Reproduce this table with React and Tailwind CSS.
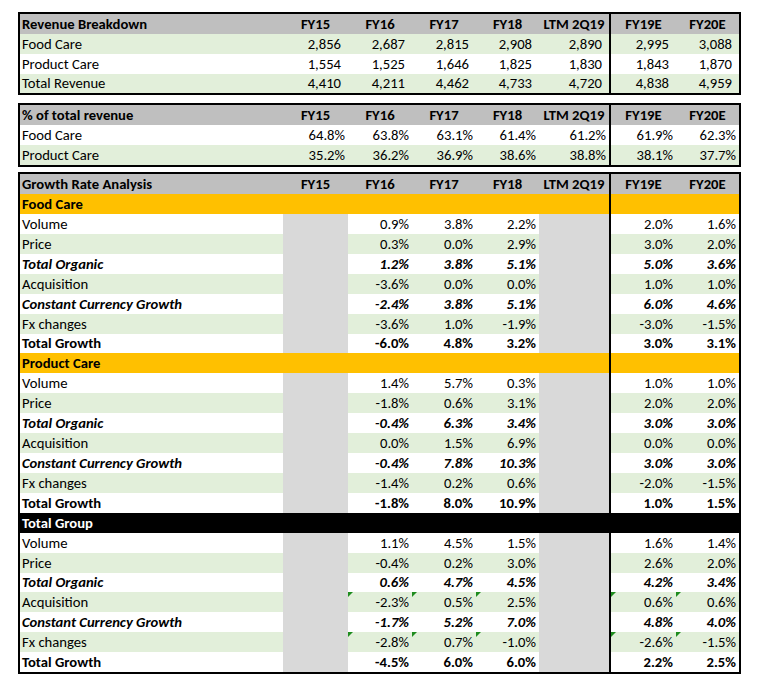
import React from "react";

const GREEN = "bg-[#e2efda]";
const GREY = "bg-[#d9d9d9]";

function Marker() {
  return (
    <span className="absolute left-0 top-0 w-0 h-0 border-t-[5px] border-r-[5px] border-t-[#1e8c1e] border-r-transparent" />
  );
}

function HeaderRow({ title }) {
  const cols = ["FY15", "FY16", "FY17", "FY18", "LTM 2Q19"];
  const widths = ["w-[65px]", "w-[64px]", "w-[64px]", "w-[63px]", "w-[70px]"];
  return (
    <div className="flex h-[20px] bg-[#bfbfbf] font-bold items-center">
      <div className="w-[263px] pl-[2px]">{title}</div>
      {cols.map((c, i) => (
        <div key={c} className={`${widths[i]} text-center`}>{c}</div>
      ))}
      <div className="w-[67px] h-full border-l-2 border-black flex items-center justify-center">FY19E</div>
      <div className="w-[63px] text-center">FY20E</div>
    </div>
  );
}

function DataRow({ label, vals, bg, style = "", pr = "pr-[3px]", grey = false, markers = false, h = "h-[20px]" }) {
  const widths = ["w-[65px]", "w-[64px]", "w-[64px]", "w-[63px]", "w-[70px]"];
  const pad = pr;
  return (
    <div className={`flex ${h} items-stretch ${bg} ${style}`}>
      <div className="w-[263px] pl-[2px] flex items-center">{label}</div>
      {vals.slice(0, 5).map((v, i) => {
        const isGrey = grey && (i === 0 || i === 4);
        return (
          <div
            key={i}
            className={`relative ${widths[i]} ${pad} flex items-center justify-end ${isGrey ? GREY : ""}`}
          >
            {markers && !isGrey && <Marker />}
            {v}
          </div>
        );
      })}
      <div className={`relative w-[67px] border-l-2 border-black ${pad} flex items-center justify-end`}>
        {markers && <Marker />}
        {vals[5]}
      </div>
      <div className={`relative w-[63px] ${pad} flex items-center justify-end`}>
        {markers && <Marker />}
        {vals[6]}
      </div>
    </div>
  );
}

function SectionRow({ label, bg, text = "text-black" }) {
  return (
    <div className={`flex h-[20px] items-stretch font-bold ${bg} ${text}`}>
      <div className="w-[263px] pl-[2px] flex items-center">{label}</div>
      <div className="w-[326px]" />
      <div className="w-[67px] border-l-2 border-black" />
      <div className="w-[63px]" />
    </div>
  );
}

const revenue = [
  ["Food Care", ["2,856", "2,687", "2,815", "2,908", "2,890", "2,995", "3,088"], GREEN, "h-[20px]"],
  ["Product Care", ["1,554", "1,525", "1,646", "1,825", "1,830", "1,843", "1,870"], "bg-white", "h-[20px]"],
  ["Total Revenue", ["4,410", "4,211", "4,462", "4,733", "4,720", "4,838", "4,959"], GREEN, "h-[19px]"],
];

const pct = [
  ["Food Care", ["64.8%", "63.8%", "63.1%", "61.4%", "61.2%", "61.9%", "62.3%"], "bg-white"],
  ["Product Care", ["35.2%", "36.2%", "36.9%", "38.6%", "38.8%", "38.1%", "37.7%"], GREEN],
];

const labels = [
  ["Volume", ""],
  ["Price", ""],
  ["Total Organic", "font-bold italic"],
  ["Acquisition", ""],
  ["Constant Currency Growth", "font-bold italic"],
  ["Fx changes", ""],
  ["Total Growth", "font-bold"],
];

const sections = [
  {
    name: "Food Care",
    bg: "bg-[#ffc000]",
    text: "text-black",
    short: 6,
    rows: [
      ["0.9%", "3.8%", "2.2%", "2.0%", "1.6%"],
      ["0.3%", "0.0%", "2.9%", "3.0%", "2.0%"],
      ["1.2%", "3.8%", "5.1%", "5.0%", "3.6%"],
      ["-3.6%", "0.0%", "0.0%", "1.0%", "1.0%"],
      ["-2.4%", "3.8%", "5.1%", "6.0%", "4.6%"],
      ["-3.6%", "1.0%", "-1.9%", "-3.0%", "-1.5%"],
      ["-6.0%", "4.8%", "3.2%", "3.0%", "3.1%"],
    ],
  },
  {
    name: "Product Care",
    bg: "bg-[#ffc000]",
    text: "text-black",
    short: -1,
    rows: [
      ["1.4%", "5.7%", "0.3%", "1.0%", "1.0%"],
      ["-1.8%", "0.6%", "3.1%", "2.0%", "2.0%"],
      ["-0.4%", "6.3%", "3.4%", "3.0%", "3.0%"],
      ["0.0%", "1.5%", "6.9%", "0.0%", "0.0%"],
      ["-0.4%", "7.8%", "10.3%", "3.0%", "3.0%"],
      ["-1.4%", "0.2%", "0.6%", "-2.0%", "-1.5%"],
      ["-1.8%", "8.0%", "10.9%", "1.0%", "1.5%"],
    ],
  },
  {
    name: "Total Group",
    bg: "bg-black",
    text: "text-white",
    markers: true,
    short: 2,
    rows: [
      ["1.1%", "4.5%", "1.5%", "1.6%", "1.4%"],
      ["-0.4%", "0.2%", "3.0%", "2.6%", "2.0%"],
      ["0.6%", "4.7%", "4.5%", "4.2%", "3.4%"],
      ["-2.3%", "0.5%", "2.5%", "0.6%", "0.6%"],
      ["-1.7%", "5.2%", "7.0%", "4.8%", "4.0%"],
      ["-2.8%", "0.7%", "-1.0%", "-2.6%", "-1.5%"],
      ["-4.5%", "6.0%", "6.0%", "2.2%", "2.5%"],
    ],
  },
];

export default function App() {
  return (
    <div className="w-[761px] h-[687px] bg-white text-black font-[Carlito,Lato,sans-serif] text-[14.67px] leading-none pl-[18px] pt-[12px]">
      <div className="w-[723px] border-2 border-black">
        <HeaderRow title="Revenue Breakdown" />
        {revenue.map(([l, v, bg, h]) => (
          <DataRow key={l} label={l} vals={v} bg={bg} pr="pr-[7px]" h={h} />
        ))}
      </div>

      <div className="w-[723px] border-2 border-black mt-[8px]">
        <HeaderRow title="% of total revenue" />
        {pct.map(([l, v, bg]) => (
          <DataRow key={l} label={l} vals={v} bg={bg} pr="pr-[3px]" />
        ))}
      </div>

      <div className="w-[723px] border-2 border-black mt-[5px]">
        <HeaderRow title="Growth Rate Analysis" />
        {sections.map((s) => (
          <React.Fragment key={s.name}>
            <SectionRow label={s.name} bg={s.bg} text={s.text} />
            {s.rows.map((r, i) => {
              const [lab, st] = labels[i];
              const vals = ["", r[0], r[1], r[2], "", r[3], r[4]];
              const markers = s.markers && (i === 3 || i === 5);
              return (
                <DataRow
                  key={lab}
                  label={lab}
                  vals={vals}
                  bg={i % 2 === 1 ? GREEN : "bg-white"}
                  style={st}
                  grey
                  markers={markers}
                  h={i === s.short ? "h-[19px]" : "h-[20px]"}
                />
              );
            })}
          </React.Fragment>
        ))}
      </div>
    </div>
  );
}
